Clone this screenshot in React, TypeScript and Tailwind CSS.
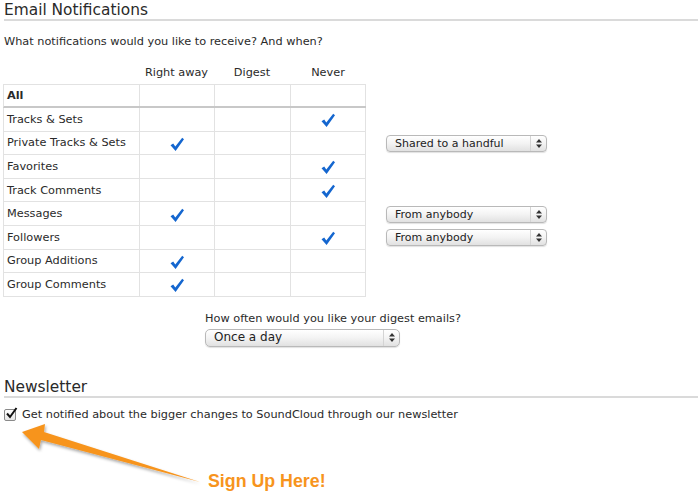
import React from "react";

const Check = () => (
  <svg width="16" height="15" viewBox="0 0 16 15" className="mt-[3px]">
    <path d="M1.5 8.2 L4.2 6.6 L6.3 9.6 L13.2 0.8 L15 2.2 L6.6 14 Z" fill="#1466cf" />
  </svg>
);

const Arrows = () => (
  <svg width="6" height="9" viewBox="0 0 6 9">
    <path d="M3 0 L6 3.5 L0 3.5 Z M0 5.5 L6 5.5 L3 9 Z" fill="#333" />
  </svg>
);

const Select = ({ label }: { label: string }) => (
  <div className="w-[161px] h-[17px] flex items-center rounded-[4px] border border-[#b9b9b9] bg-gradient-to-b from-white via-[#f3f3f3] to-[#e1e1e1] shadow-[0_1px_1px_rgba(0,0,0,0.12)] text-[11px] text-[#222]">
    <span className="flex-1 pl-[8px] leading-[15px] truncate">{label}</span>
    <span className="w-[16px] h-full border-l border-[#d4d4d4] flex items-center justify-center">
      <Arrows />
    </span>
  </div>
);

type Row = { label: string; col: number; select?: string };

const rows: Row[] = [
  { label: "Tracks & Sets", col: 2 },
  { label: "Private Tracks & Sets", col: 0, select: "Shared to a handful" },
  { label: "Favorites", col: 2 },
  { label: "Track Comments", col: 2 },
  { label: "Messages", col: 0, select: "From anybody" },
  { label: "Followers", col: 2, select: "From anybody" },
  { label: "Group Additions", col: 0 },
  { label: "Group Comments", col: 0 },
];

export default function App() {
  return (
    <div className="relative w-[700px] h-[500px] overflow-hidden bg-white font-['DejaVu_Sans',sans-serif] text-[#333]">
      <div className="pl-[4px] pr-[2px]">
        <div className="h-[21px] text-[15.4px] leading-[21px] text-[#2a2a2a] border-b-2 border-[#dadada]">
          Email Notifications
        </div>
        <p className="mt-[13px] text-[11.3px] leading-[15px] text-[#2a2a2a]">
          What notifications would you like to receive? And when?
        </p>

        <div className="mt-[13px] -ml-[1px] text-[11.3px] text-[#2a2a2a]">
          <div className="flex h-[22px] items-center">
            <div className="w-[136px]" />
            <div className="w-[75px] text-center">Right away</div>
            <div className="w-[76px] text-center">Digest</div>
            <div className="w-[76px] text-center">Never</div>
          </div>
          <div className="flex w-[363px] h-[24px] border-t border-b-2 border-l border-[#e2e2e2] border-b-[#c8c8c8]">
            <div className="w-[135px] pl-[3px] pt-[1px] flex items-center font-bold">All</div>
            <div className="w-[75px] border-l border-[#e2e2e2]" />
            <div className="w-[76px] border-l border-[#e2e2e2]" />
            <div className="w-[76px] border-l border-r border-[#e2e2e2]" />
          </div>
          {rows.map((r) => (
            <div key={r.label} className="flex items-center h-[23.6px]">
              <div className="flex w-[363px] h-full border-b border-l border-[#e2e2e2]">
                <div className="w-[135px] pl-[3px] pt-[2px] flex items-center">{r.label}</div>
                {[0, 1, 2].map((c) => (
                  <div
                    key={c}
                    className={`${c === 0 ? "w-[75px]" : "w-[76px]"} border-l border-[#e2e2e2] ${c === 2 ? "border-r" : ""} flex items-center justify-center`}
                  >
                    {r.col === c && <Check />}
                  </div>
                ))}
              </div>
              {r.select && (
                <div className="ml-[20px]">
                  <Select label={r.select} />
                </div>
              )}
            </div>
          ))}
        </div>

        <div className="ml-[201px] mt-[14px]">
          <p className="text-[11.3px] leading-[15px] text-[#2a2a2a]">How often would you like your digest emails?</p>
          <div className="mt-[3px]">
            <div className="w-[195px] h-[18px] flex items-center rounded-[5px] border border-[#b9b9b9] bg-gradient-to-b from-white via-[#f3f3f3] to-[#e1e1e1] shadow-[0_1px_1px_rgba(0,0,0,0.12)] text-[12px] text-[#222]">
              <span className="flex-1 pl-[8px] leading-[15px]">Once a day</span>
              <span className="w-[16px] h-full border-l border-[#d4d4d4] flex items-center justify-center">
                <Arrows />
              </span>
            </div>
          </div>
        </div>

        <div className="mt-[30px] h-[21px] text-[15.4px] leading-[21px] text-[#2a2a2a] border-b-2 border-[#dadada]">
          Newsletter
        </div>
        <div className="mt-[9px] flex items-center gap-[6px] text-[11.3px] text-[#2a2a2a]">
          <div className="w-[12px] h-[12px] border border-[#8a8a8a] rounded-[2px] bg-gradient-to-b from-white to-[#e6e6e6] relative">
            <svg className="absolute -top-[3px] left-[0px]" width="13" height="13" viewBox="0 0 13 13">
              <path d="M2 6.5 L5 10 L11.5 1" stroke="#111" strokeWidth="2" fill="none" />
            </svg>
          </div>
          <span>Get notified about the bigger changes to SoundCloud through our newsletter</span>
        </div>
      </div>

      <svg className="absolute left-0 top-0" width="700" height="500" viewBox="0 0 700 500">
        <defs>
          <filter id="sh" x="-10%" y="-10%" width="130%" height="130%">
            <feDropShadow dx="1" dy="2" stdDeviation="1.5" floodColor="#000" floodOpacity="0.35" />
          </filter>
        </defs>
        <path d="M22 432 L45 424 L44 432 L200 482 L41 440 L39 449 Z" fill="#f7941d" filter="url(#sh)" />
      </svg>
      <div className="absolute left-[208px] top-[470px] text-[17.8px] leading-[22px] font-bold font-['Liberation_Sans',Arial,sans-serif] text-[#f7941d]">
        Sign Up Here!
      </div>
    </div>
  );
}
